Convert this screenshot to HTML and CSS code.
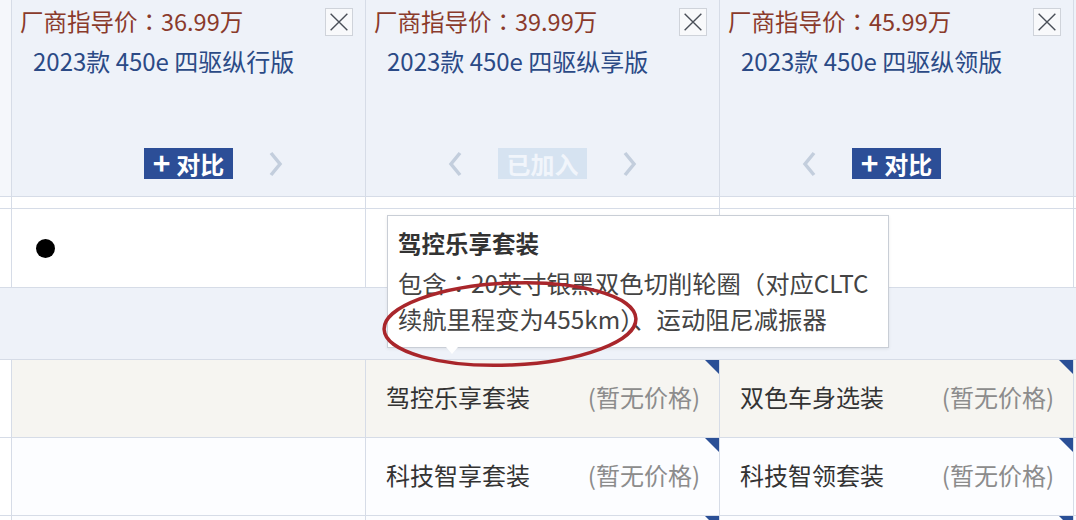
FILE: index.html
```html
<!DOCTYPE html>
<html lang="zh-CN">
<head>
<meta charset="utf-8">
<title>车型对比</title>
<link rel="stylesheet" href="styles.css">
</head>
<body>
<div class="sheet">
  <div class="row head">
    <div class="cell edge"></div>
    <div class="cell car">
      <div class="price-line"><span class="price">厂商指导价<span class="punct" lang="zh-TW">：</span>36.99万</span><span class="close"><svg viewBox="0 0 28 28" width="28" height="28"><path d="M5 5 L23 23 M23 5 L5 23" stroke="#4a4f58" stroke-width="1.5" fill="none"/></svg></span></div>
      <div class="model">2023款 450e 四驱纵行版</div>
      <div class="controls">
        <span class="chev hidden"><svg viewBox="0 0 15 26" width="15" height="26"><path d="M12 2 L3 13 L12 24" stroke="#c3cedd" stroke-width="3.5" fill="none"/></svg></span>
        <span class="btn add"><span class="plus">+</span>对比</span>
        <span class="chev"><svg viewBox="0 0 15 26" width="15" height="26"><path d="M3 2 L12 13 L3 24" stroke="#c3cedd" stroke-width="3.5" fill="none"/></svg></span>
      </div>
    </div>
    <div class="cell car">
      <div class="price-line"><span class="price">厂商指导价<span class="punct" lang="zh-TW">：</span>39.99万</span><span class="close"><svg viewBox="0 0 28 28" width="28" height="28"><path d="M5 5 L23 23 M23 5 L5 23" stroke="#4a4f58" stroke-width="1.5" fill="none"/></svg></span></div>
      <div class="model">2023款 450e 四驱纵享版</div>
      <div class="controls">
        <span class="chev"><svg viewBox="0 0 15 26" width="15" height="26"><path d="M12 2 L3 13 L12 24" stroke="#c3cedd" stroke-width="3.5" fill="none"/></svg></span>
        <span class="btn added">已加入</span>
        <span class="chev"><svg viewBox="0 0 15 26" width="15" height="26"><path d="M3 2 L12 13 L3 24" stroke="#c3cedd" stroke-width="3.5" fill="none"/></svg></span>
      </div>
    </div>
    <div class="cell car">
      <div class="price-line"><span class="price">厂商指导价<span class="punct" lang="zh-TW">：</span>45.99万</span><span class="close"><svg viewBox="0 0 28 28" width="28" height="28"><path d="M5 5 L23 23 M23 5 L5 23" stroke="#4a4f58" stroke-width="1.5" fill="none"/></svg></span></div>
      <div class="model">2023款 450e 四驱纵领版</div>
      <div class="controls">
        <span class="chev"><svg viewBox="0 0 15 26" width="15" height="26"><path d="M12 2 L3 13 L12 24" stroke="#c3cedd" stroke-width="3.5" fill="none"/></svg></span>
        <span class="btn add"><span class="plus">+</span>对比</span>
        <span class="chev hidden"><svg viewBox="0 0 15 26" width="15" height="26"><path d="M3 2 L12 13 L3 24" stroke="#c3cedd" stroke-width="3.5" fill="none"/></svg></span>
      </div>
    </div>
    <div class="cell tail"></div>
  </div>

  <div class="row strip">
    <div class="cell edge"></div>
    <div class="cell"></div>
    <div class="cell"></div>
    <div class="cell"></div>
    <div class="cell tail"></div>
  </div>

  <div class="row r1">
    <div class="cell edge"></div>
    <div class="cell dotcell"><span class="dot"></span></div>
    <div class="cell anchor">
      <div class="tooltip">
        <div class="tip-title">驾控乐享套装</div>
        <div class="tip-body">包含<span class="punct" lang="zh-TW">：</span>20英寸银黑双色切削轮圈<span class="punct" lang="zh-TW">（</span>对应CLTC<br>续航里程变为455km<span class="punct" lang="zh-TW">）</span>、运动阻尼减振器</div>
      </div>
      <svg class="mark" viewBox="0 0 270 95" width="270" height="95"><ellipse cx="135" cy="47" rx="126" ry="41" transform="rotate(-2.5 135 47)" stroke="#a9262b" stroke-width="3.5" fill="none"/></svg>
    </div>
    <div class="cell"></div>
    <div class="cell tail"></div>
  </div>

  <div class="band"></div>

  <div class="row opt beige">
    <div class="cell edge"></div>
    <div class="cell"></div>
    <div class="cell item"><span class="name">驾控乐享套装</span><span class="cost">(暂无价格)</span></div>
    <div class="cell item"><span class="name">双色车身选装</span><span class="cost">(暂无价格)</span></div>
    <div class="cell tail"></div>
  </div>

  <div class="row opt">
    <div class="cell edge"></div>
    <div class="cell"></div>
    <div class="cell item"><span class="name">科技智享套装</span><span class="cost">(暂无价格)</span></div>
    <div class="cell item"><span class="name">科技智领套装</span><span class="cost">(暂无价格)</span></div>
    <div class="cell tail"></div>
  </div>

  <div class="row opt last">
    <div class="cell edge"></div>
    <div class="cell"></div>
    <div class="cell item"></div>
    <div class="cell item"></div>
    <div class="cell tail"></div>
  </div>
</div>
</body>
</html>
```

FILE: styles.css
```css
* { box-sizing: border-box; }

html, body {
  margin: 0;
  padding: 0;
  background: #ffffff;
}

body {
  width: 1076px;
  height: 520px;
  overflow: hidden;
  font-family: "Noto Sans CJK SC", "Noto Sans", sans-serif;
  color: #333333;
}

.punct {
  font-family: "Noto Sans CJK TC", "Noto Sans CJK SC", sans-serif;
}

.sheet {
  display: flex;
  flex-direction: column;
}

.row {
  display: grid;
  grid-template-columns: 11px 354px 354px 354px 1fr;
  border-bottom: 1px solid #d6dce7;
}

.cell {
  border-left: 1px solid #d6dce7;
  position: relative;
}

.cell.edge {
  border-left: none;
}

/* header */
.head {
  height: 197px;
  background: #eef2f9;
}

.head .edge {
  background: #f5f7fb;
}

.car {
  display: flex;
  flex-direction: column;
  padding: 6px 12px 0 8px;
}

.price-line {
  display: flex;
  justify-content: space-between;
  align-items: flex-start;
  height: 30px;
}

.price {
  font-size: 23.5px;
  line-height: 30px;
  color: #8a3a2b;
}

.close {
  width: 28px;
  height: 28px;
  margin-top: 2px;
  border: 1px solid #cfd3da;
  background: #f8f9fb;
  display: flex;
}

.close svg {
  width: 26px;
  height: 26px;
}

.model {
  margin-top: 10px;
  padding-left: 13px;
  font-size: 24px;
  line-height: 30px;
  color: #2b4a86;
}

.controls {
  margin-top: 72px;
  margin-left: -8px;
  margin-right: -12px;
  height: 31px;
  display: flex;
  align-items: center;
  justify-content: center;
  gap: 35px;
}

.chev {
  width: 15px;
  height: 26px;
  display: flex;
}

.chev.hidden {
  visibility: hidden;
}

.btn {
  width: 89px;
  height: 31px;
  font-size: 24px;
  line-height: 31px;
  font-weight: 700;
  display: flex;
  align-items: center;
  justify-content: center;
}

.plus {
  font-size: 30px;
  font-weight: 700;
  margin-right: 6px;
  margin-top: -2px;
}

.btn.add {
  background: #2c4e97;
  color: #ffffff;
}

.btn.added {
  background: #d6e3f1;
  color: #f1f5fb;
}

/* strip */
.strip {
  height: 12px;
  background: #ffffff;
}

/* row with dot */
.r1 {
  height: 79px;
  background: #ffffff;
}

.dotcell {
  display: flex;
  align-items: center;
  padding-left: 24px;
}

.dot {
  width: 19px;
  height: 19px;
  border-radius: 50%;
  background: #000000;
}

.anchor {
  z-index: 2;
}

.tooltip {
  position: absolute;
  left: 21px;
  top: 6px;
  width: 502px;
  height: 133px;
  background: #ffffff;
  border: 1px solid #c9ced6;
  box-shadow: 0 1px 3px rgba(0, 0, 0, 0.08);
  padding: 9px 10px 0 10px;
}

.tooltip::after {
  content: "";
  position: absolute;
  left: 58px;
  bottom: -7px;
  width: 0;
  height: 0;
  border-left: 6px solid transparent;
  border-right: 6px solid transparent;
  border-top: 7px solid #ffffff;
}

.tip-title {
  font-size: 23.5px;
  line-height: 37px;
  font-weight: 700;
  color: #333333;
  margin-bottom: 3px;
}

.tip-body {
  font-size: 24.3px;
  line-height: 36px;
  color: #444444;
  white-space: nowrap;
}

.mark {
  position: absolute;
  left: 9px;
  top: 68px;
  z-index: 3;
}

/* section band */
.band {
  height: 72px;
  background: #eef2f9;
  border-bottom: 1px solid #d6dce7;
}

/* option rows */
.opt {
  height: 78px;
  background: #fcfdff;
}

.opt.beige {
  background: #f6f5f1;
}

.opt .edge {
  background: #ffffff;
}

.opt.last {
  height: 20px;
  border-bottom: none;
}

.item {
  display: flex;
  justify-content: space-between;
  align-items: center;
  padding: 0 19px 4px 20px;
}

.item::after {
  content: "";
  position: absolute;
  top: 0;
  right: 0;
  width: 0;
  height: 0;
  border-top: 14px solid #2a4f96;
  border-left: 14px solid transparent;
}

.name {
  font-size: 24px;
  color: #333333;
}

.cost {
  font-size: 24px;
  color: #8c8c8c;
}
```
